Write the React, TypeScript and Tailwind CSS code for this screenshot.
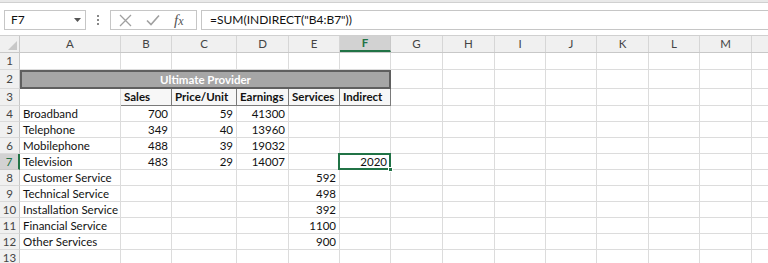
const cols = [
  { key: "A", w: "w-[101px]" },
  { key: "B", w: "w-[51px]" },
  { key: "C", w: "w-[65px]" },
  { key: "D", w: "w-[52px]" },
  { key: "E", w: "w-[51px]" },
  { key: "F", w: "w-[51px]" },
  { key: "G", w: "w-[52px]" },
  { key: "H", w: "w-[52px]" },
  { key: "I", w: "w-[51px]" },
  { key: "J", w: "w-[51px]" },
  { key: "K", w: "w-[52px]" },
  { key: "L", w: "w-[51px]" },
  { key: "M", w: "w-[52px]" },
  { key: "", w: "w-[30px]" },
];

type Row = { n: number; cells: (string | number | null)[] };

const rows: Row[] = [
  { n: 4, cells: ["Broadband", 700, 59, 41300, null, null] },
  { n: 5, cells: ["Telephone", 349, 40, 13960, null, null] },
  { n: 6, cells: ["Mobilephone", 488, 39, 19032, null, null] },
  { n: 7, cells: ["Television", 483, 29, 14007, null, 2020] },
  { n: 8, cells: ["Customer Service", null, null, null, 592, null] },
  { n: 9, cells: ["Technical Service", null, null, null, 498, null] },
  { n: 10, cells: ["Installation Service", null, null, null, 392, null] },
  { n: 11, cells: ["Financial Service", null, null, null, 1100, null] },
  { n: 12, cells: ["Other Services", null, null, null, 900, null] },
  { n: 13, cells: [null, null, null, null, null, null] },
];

function RowHead({ n, active }: { n: number; active?: boolean }) {
  return (
    <div
      className={
        active
          ? "w-[20px] shrink-0 flex items-center justify-center bg-[#d2d2d2] text-[#217346] border-r-2 border-r-[#217346] border-b border-b-[#c8c8c8] text-[11.5px]"
          : "w-[20px] shrink-0 flex items-center justify-center bg-[#f0f0f0] text-[#444] border-r border-r-[#c8c8c8] border-b border-b-[#dadada] text-[11.5px]"
      }
    >
      {n}
    </div>
  );
}

function Cell({ w, children, right }: { w: string; children?: React.ReactNode; right?: boolean }) {
  return (
    <div
      className={`${w} shrink-0 border-r border-b border-[#dcdcdc] px-[3px] flex items-center whitespace-nowrap ${
        right ? "justify-end" : "justify-start"
      }`}
    >
      {children}
    </div>
  );
}

export default function App() {
  return (
    <div className="w-[768px] h-[263px] overflow-hidden bg-white text-[#111] font-['Lato','Liberation_Sans',sans-serif] text-[11.5px]">
      {/* Ribbon edge */}
      <div className="h-[3px] bg-[#e9e9e9] border-b border-[#d0d0d0]" />

      {/* Formula bar */}
      <div className="h-[33px] flex items-start pt-[7px] border-b border-[#d0d0d0]">
        <div className="ml-[4px] w-[82px] h-[20px] border border-[#c6c6c6] flex items-center justify-between pl-[6px] pr-[4px] text-[12px]">
          <span>F7</span>
          <svg width="7" height="4" viewBox="0 0 7 4">
            <path d="M0 0h7L3.5 4z" fill="#555" />
          </svg>
        </div>
        <div className="w-[24px] h-[20px] flex flex-col items-center justify-center gap-[2px]">
          <span className="w-[2px] h-[2px] bg-[#888]" />
          <span className="w-[2px] h-[2px] bg-[#888]" />
          <span className="w-[2px] h-[2px] bg-[#888]" />
        </div>
        <div className="w-[87px] h-[20px] border border-[#c6c6c6] flex items-center pl-[8px] gap-[14px]">
          <svg width="13" height="13" viewBox="0 0 13 13">
            <path d="M1 1l11 11M12 1L1 12" stroke="#a0a0a0" strokeWidth="1.3" />
          </svg>
          <svg width="14" height="12" viewBox="0 0 14 12">
            <path d="M1 6.5l4 4L13 1.5" stroke="#a0a0a0" strokeWidth="1.6" fill="none" />
          </svg>
          <span className="font-['Liberation_Serif',serif] italic text-[15px] text-[#555] leading-none">
            f<span className="text-[12px]">x</span>
          </span>
        </div>
        <div className="ml-[4px] flex-1 h-[20px] border-y border-l border-[#c6c6c6] flex items-center pl-[8px] text-[12px]">
          =SUM(INDIRECT("B4:B7"))
        </div>
      </div>

      {/* Column headers */}
      <div className="h-[17px] flex bg-[#f0f0f0] border-b border-[#c8c8c8] text-[#444]">
        <div className="w-[20px] shrink-0 border-r border-[#c8c8c8] relative">
          <svg className="absolute right-[2px] bottom-[2px]" width="9" height="9" viewBox="0 0 9 9">
            <path d="M9 0v9H0z" fill="#c8c8c8" />
          </svg>
        </div>
        {cols.map((c, i) => (
          <div
            key={i}
            className={
              c.key === "F"
                ? `${c.w} shrink-0 flex items-center justify-center bg-[#d2d2d2] text-[#217346] font-bold border-b-2 border-[#217346] border-r border-r-[#c8c8c8]`
                : `${c.w} shrink-0 flex items-center justify-center border-r border-[#d6d6d6]`
            }
          >
            {c.key}
          </div>
        ))}
      </div>

      {/* Row 1 */}
      <div className="h-[17px] flex">
        <RowHead n={1} />
        {cols.map((c, i) => (
          <Cell key={i} w={c.w} />
        ))}
      </div>

      {/* Row 2 - title */}
      <div className="h-[19px] flex">
        <RowHead n={2} />
        <div className="w-[371px] shrink-0 bg-[#a6a6a6] border-2 border-[#5f5f5f] flex items-center justify-center text-white font-bold">
          Ultimate Provider
        </div>
        {cols.slice(6).map((c, i) => (
          <Cell key={i} w={c.w} />
        ))}
      </div>

      {/* Row 3 - headings */}
      <div className="h-[17px] flex">
        <RowHead n={3} />
        <Cell w="w-[101px]" />
        {["Sales", "Price/Unit", "Earnings", "Services", "Indirect"].map((t, i) => (
          <div
            key={t}
            className={`${cols[i + 1].w} shrink-0 border-r border-b border-[#7a7a7a] bg-[#f7f7f7] font-bold px-[3px] flex items-center`}
          >
            {t}
          </div>
        ))}
        {cols.slice(6).map((c, i) => (
          <Cell key={i} w={c.w} />
        ))}
      </div>

      {/* Data rows */}
      {rows.map((r) => (
        <div key={r.n} className="h-[16px] flex">
          <RowHead n={r.n} active={r.n === 7} />
          {cols.map((c, i) => {
            const v = i < 6 ? r.cells[i] : null;
            const selected = r.n === 7 && c.key === "F";
            if (selected) {
              return (
                <div key={i} className={`${c.w} shrink-0 relative border-r border-b border-[#dcdcdc]`}>
                  <div className="absolute -left-[2px] -top-[1px] -right-[1px] -bottom-[1px] border-2 border-[#217346] flex items-center justify-end pr-[2px]">
                    {v}
                  </div>
                  <span className="absolute -right-[3px] -bottom-[3px] w-[5px] h-[5px] bg-[#217346] border border-white" />
                </div>
              );
            }
            return (
              <Cell key={i} w={c.w} right={typeof v === "number"}>
                {v}
              </Cell>
            );
          })}
        </div>
      ))}
    </div>
  );
}
